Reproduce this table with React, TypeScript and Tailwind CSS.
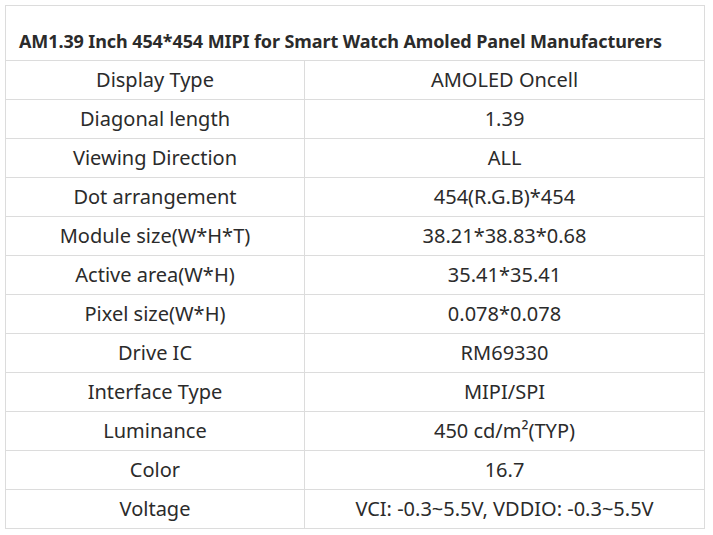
const rows: [string, string][] = [
  ["Display Type", "AMOLED Oncell"],
  ["Diagonal length", "1.39"],
  ["Viewing Direction", "ALL"],
  ["Dot arrangement", "454(R.G.B)*454"],
  ["Module size(W*H*T)", "38.21*38.83*0.68"],
  ["Active area(W*H)", "35.41*35.41"],
  ["Pixel size(W*H)", "0.078*0.078"],
  ["Drive IC", "RM69330"],
  ["Interface Type", "MIPI/SPI"],
  ["Luminance", "450 cd/m²(TYP)"],
  ["Color", "16.7"],
  ["Voltage", "VCI: -0.3~5.5V, VDDIO: -0.3~5.5V"],
];

export default function App() {
  return (
    <div className="min-h-screen bg-white pl-[5px] pt-[5px] font-['Noto_Sans',sans-serif] text-[#2b2b2b]">
      <table className="w-[699px] table-fixed border-collapse">
        <colgroup>
          <col className="w-[299px]" />
          <col className="w-[400px]" />
        </colgroup>
        <tbody>
          <tr>
            <td
              colSpan={2}
              className="h-[55px] whitespace-nowrap border border-[#dcdcdc] px-[13px] pt-[16px] text-left align-middle text-[18px] font-bold tracking-[-0.1px]"
            >
              AM1.39 Inch 454*454 MIPI for Smart Watch Amoled Panel Manufacturers
            </td>
          </tr>
          {rows.map(([k, v]) => (
            <tr key={k}>
              <td className="h-[39px] border border-[#dcdcdc] p-0 text-center align-middle text-[20px]">
                {k}
              </td>
              <td className="h-[39px] whitespace-nowrap border border-[#dcdcdc] p-0 text-center align-middle text-[20px]">
                {v}
              </td>
            </tr>
          ))}
        </tbody>
      </table>
    </div>
  );
}
